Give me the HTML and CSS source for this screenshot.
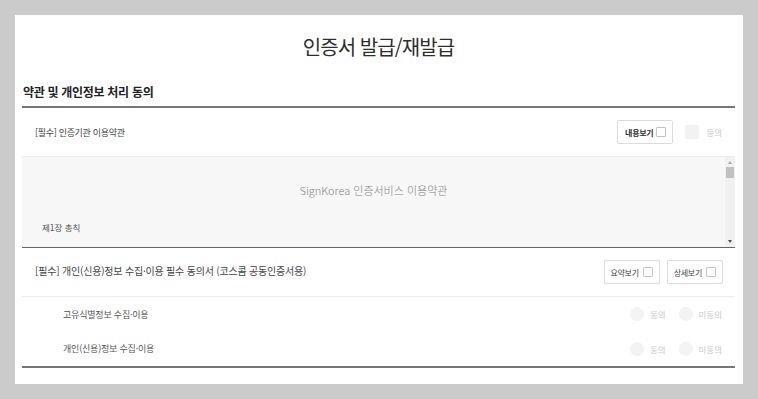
FILE: index.html
```html
<!DOCTYPE html>
<html lang="ko">
<head>
<meta charset="utf-8">
<title>인증서 발급/재발급</title>
<link rel="stylesheet" href="styles.css">
</head>
<body>
<div class="page">
  <div class="panel">
    <h1 class="title">인증서 발급/재발급</h1>
    <h2 class="section-title">약관 및 개인정보 처리 동의</h2>

    <div class="row">
      <span class="row-label">[필수] 인증기관 이용약관</span>
      <div class="row-actions">
        <button class="btn" type="button">내용보기<span class="btn-box"></span></button>
        <label class="agree"><span class="agree-box"></span><span class="agree-text">동의</span></label>
      </div>
    </div>

    <div class="terms">
      <div class="terms-body">
        <p class="terms-title">SignKorea 인증서비스 이용약관</p>
        <p class="terms-chapter">제1장 총칙</p>
      </div>
      <div class="scrollbar">
        <span class="sb-up"></span>
        <span class="sb-thumb"></span>
        <span class="sb-spacer"></span>
        <span class="sb-down"></span>
      </div>
    </div>

    <div class="row row-second">
      <span class="row-label row-label-lg">[필수] 개인(신용)정보 수집·이용 필수 동의서 (코스콤 공동인증서용)</span>
      <div class="row-actions row-actions-tight">
        <button class="btn" type="button">요약보기<span class="btn-box"></span></button>
        <button class="btn" type="button">상세보기<span class="btn-box"></span></button>
      </div>
    </div>

    <div class="sub-list">
      <div class="sub-row">
        <span class="sub-label">고유식별정보 수집·이용</span>
        <div class="radios">
          <label class="radio"><span class="radio-dot"></span><span class="radio-text">동의</span></label>
          <label class="radio"><span class="radio-dot"></span><span class="radio-text">미동의</span></label>
        </div>
      </div>
      <div class="sub-row">
        <span class="sub-label">개인(신용)정보 수집·이용</span>
        <div class="radios">
          <label class="radio"><span class="radio-dot"></span><span class="radio-text">동의</span></label>
          <label class="radio"><span class="radio-dot"></span><span class="radio-text">미동의</span></label>
        </div>
      </div>
    </div>
  </div>
</div>
</body>
</html>
```

FILE: styles.css
```css
* { box-sizing: border-box; }

html, body {
  margin: 0;
  padding: 0;
  background: #cbcbcb;
  font-family: "Noto Sans CJK KR", "Noto Sans", sans-serif;
  color: #333;
}

.page {
  padding: 15px;
}

.panel {
  width: 728px;
  height: 369px;
  background: #ffffff;
  padding: 0 8px 0 7px;
  overflow: hidden;
}

.title {
  margin: 0;
  padding-top: 18px;
  font-size: 20px;
  line-height: 28px;
  font-weight: 400;
  letter-spacing: -0.9px;
  text-align: center;
  color: #2e2e2e;
}

.section-title {
  margin: 21px 0 0;
  padding: 0 0 4px 1px;
  font-size: 12px;
  line-height: 20px;
  font-weight: 700;
  letter-spacing: -0.3px;
  color: #222;
  border-bottom: 2px solid #767676;
}

.row {
  display: flex;
  align-items: center;
  justify-content: space-between;
  height: 49px;
  padding: 0 13px 0 13px;
  border-bottom: 1px solid #ececec;
}

.row-second {
  padding-right: 12px;
}

.row-label {
  font-size: 9px;
  letter-spacing: -0.3px;
  color: #444;
  white-space: nowrap;
}

.row-label-lg {
  font-size: 10px;
  letter-spacing: -0.2px;
  margin-top: -3px;
}

.row-actions {
  display: flex;
  align-items: center;
  gap: 12px;
}

.row-actions-tight {
  gap: 7px;
}

.btn {
  display: flex;
  align-items: center;
  gap: 3px;
  height: 24px;
  padding: 0 6px 0 7px;
  background: #fff;
  border: 1px solid #dcdcdc;
  border-radius: 2px;
  font-family: inherit;
  font-size: 8px;
  font-weight: 700;
  letter-spacing: -0.3px;
  color: #333;
  white-space: nowrap;
  cursor: pointer;
}

.row-second .btn {
  font-weight: 400;
  color: #444;
  padding: 0 6px 0 6px;
  gap: 4px;
}

.btn-box {
  display: inline-block;
  flex: none;
  width: 10px;
  height: 10px;
  border: 1px solid #c4c4c4;
  border-radius: 1px;
  background: #fff;
}

.agree {
  display: flex;
  align-items: center;
  gap: 7px;
}

.agree-box {
  display: inline-block;
  width: 14px;
  height: 14px;
  background: #f2f2f2;
  border-radius: 1px;
}

.agree-text {
  font-size: 8.5px;
  color: #c8c8c8;
}

.terms {
  display: flex;
  height: 91px;
  background: #f7f7f7;
  border-bottom: 1px solid #666;
}

.terms-body {
  flex: 1;
  overflow: hidden;
  padding: 23px 0 0 20px;
}

.terms-title {
  margin: 0;
  font-size: 11px;
  line-height: 20px;
  font-weight: 300;
  color: #858585;
  text-align: center;
  padding-right: 20px;
}

.terms-chapter {
  margin: 20px 0 0;
  font-size: 8.5px;
  line-height: 14px;
  color: #555;
}

.scrollbar {
  width: 10px;
  display: flex;
  flex-direction: column;
  align-items: center;
  background: #f1f1f1;
  padding: 4px 0 4px;
}

.sb-up {
  width: 0;
  height: 0;
  border-left: 2.5px solid transparent;
  border-right: 2.5px solid transparent;
  border-bottom: 3px solid #a8a8a8;
}

.sb-thumb {
  margin-top: 3px;
  width: 8px;
  height: 11px;
  background: #c1c1c1;
}

.sb-spacer {
  flex: 1;
}

.sb-down {
  width: 0;
  height: 0;
  border-left: 2.5px solid transparent;
  border-right: 2.5px solid transparent;
  border-top: 3px solid #505050;
}

.sub-list {
  border-bottom: 2px solid #767676;
}

.sub-row {
  display: flex;
  align-items: center;
  justify-content: space-between;
  height: 34px;
  padding: 0 13px 0 41px;
}

.sub-row + .sub-row {
  height: 35px;
}

.sub-label {
  font-size: 9px;
  letter-spacing: -0.2px;
  color: #555;
}

.radios {
  display: flex;
  align-items: center;
  gap: 13px;
}

.radio {
  display: flex;
  align-items: center;
  gap: 6px;
}

.radio-dot {
  display: inline-block;
  width: 14px;
  height: 14px;
  border-radius: 50%;
  background: #f3f3f3;
}

.radio-text {
  font-size: 8.5px;
  color: #c8c8c8;
}
```
